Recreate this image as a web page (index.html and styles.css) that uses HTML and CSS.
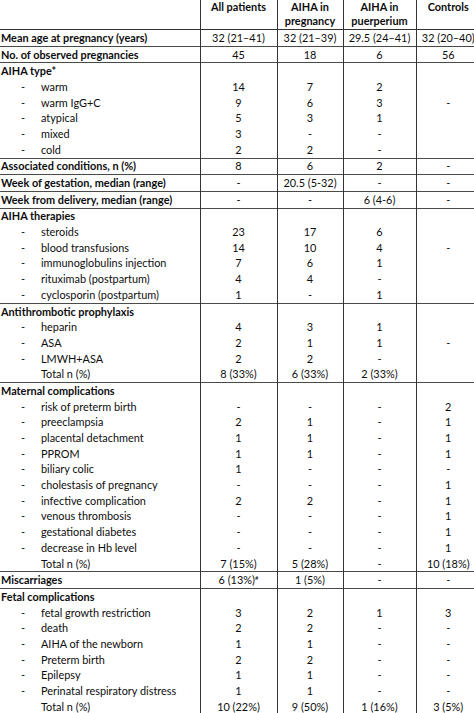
FILE: index.html
```html
<!DOCTYPE html>
<html>
<head>
<meta charset="utf-8">
<link rel="stylesheet" href="styles.css">
</head>
<body>
<div class="wrap">
<table class="tbl">
<colgroup><col class="c0"><col class="c1"><col class="c2"><col class="c3"><col class="c4"></colgroup>
<thead>
<tr class="head"><th></th><th>All patients</th><th>AIHA in<br>pregnancy</th><th>AIHA in<br>puerperium</th><th>Controls</th></tr>
</thead>
<tbody>
<tr class="sec"><td class="lab b">Mean age at pregnancy (years)</td><td>32 (21–41)</td><td>32 (21–39)</td><td>29.5 (24–41)</td><td>32 (20–40)</td></tr>
<tr class="sec"><td class="lab b">No. of observed pregnancies</td><td>45</td><td>18</td><td>6</td><td>56</td></tr>
<tr class="sec"><td class="lab b">AIHA type*</td><td></td><td></td><td></td><td></td></tr>
<tr><td class="lab"><span class="dash">-</span>warm</td><td>14</td><td>7</td><td>2</td><td></td></tr>
<tr><td class="lab"><span class="dash">-</span>warm IgG+C</td><td>9</td><td>6</td><td>3</td><td>-</td></tr>
<tr><td class="lab"><span class="dash">-</span>atypical</td><td>5</td><td>3</td><td>1</td><td></td></tr>
<tr><td class="lab"><span class="dash">-</span>mixed</td><td>3</td><td>-</td><td>-</td><td></td></tr>
<tr><td class="lab"><span class="dash">-</span>cold</td><td>2</td><td>2</td><td>-</td><td></td></tr>
<tr class="sec"><td class="lab b">Associated conditions, n (%)</td><td>8</td><td>6</td><td>2</td><td>-</td></tr>
<tr class="sec"><td class="lab b">Week of gestation, median (range)</td><td>-</td><td>20.5 (5-32)</td><td>-</td><td>-</td></tr>
<tr class="sec"><td class="lab b">Week from delivery, median (range)</td><td>-</td><td>-</td><td>6 (4-6)</td><td>-</td></tr>
<tr class="sec"><td class="lab b">AIHA therapies</td><td></td><td></td><td></td><td></td></tr>
<tr><td class="lab"><span class="dash">-</span>steroids</td><td>23</td><td>17</td><td>6</td><td></td></tr>
<tr><td class="lab"><span class="dash">-</span>blood transfusions</td><td>14</td><td>10</td><td>4</td><td>-</td></tr>
<tr><td class="lab"><span class="dash">-</span>immunoglobulins injection</td><td>7</td><td>6</td><td>1</td><td></td></tr>
<tr><td class="lab"><span class="dash">-</span>rituximab (postpartum)</td><td>4</td><td>4</td><td>-</td><td></td></tr>
<tr><td class="lab"><span class="dash">-</span>cyclosporin (postpartum)</td><td>1</td><td>-</td><td>1</td><td></td></tr>
<tr class="sec"><td class="lab b">Antithrombotic prophylaxis</td><td></td><td></td><td></td><td></td></tr>
<tr><td class="lab"><span class="dash">-</span>heparin</td><td>4</td><td>3</td><td>1</td><td></td></tr>
<tr><td class="lab"><span class="dash">-</span>ASA</td><td>2</td><td>1</td><td>1</td><td>-</td></tr>
<tr><td class="lab"><span class="dash">-</span>LMWH+ASA</td><td>2</td><td>2</td><td>-</td><td></td></tr>
<tr><td class="lab"><span class="dash"></span>Total n (%)</td><td>8 (33%)</td><td>6 (33%)</td><td>2 (33%)</td><td></td></tr>
<tr class="sec"><td class="lab b">Maternal complications</td><td></td><td></td><td></td><td></td></tr>
<tr><td class="lab"><span class="dash">-</span>risk of preterm birth</td><td>-</td><td>-</td><td>-</td><td>2</td></tr>
<tr><td class="lab"><span class="dash">-</span>preeclampsia</td><td>2</td><td>1</td><td>-</td><td>1</td></tr>
<tr><td class="lab"><span class="dash">-</span>placental detachment</td><td>1</td><td>1</td><td>-</td><td>1</td></tr>
<tr><td class="lab"><span class="dash">-</span>PPROM</td><td>1</td><td>1</td><td>-</td><td>1</td></tr>
<tr><td class="lab"><span class="dash">-</span>biliary colic</td><td>1</td><td>-</td><td>-</td><td>-</td></tr>
<tr><td class="lab"><span class="dash">-</span>cholestasis of pregnancy</td><td>-</td><td>-</td><td>-</td><td>1</td></tr>
<tr><td class="lab"><span class="dash">-</span>infective complication</td><td>2</td><td>2</td><td>-</td><td>1</td></tr>
<tr><td class="lab"><span class="dash">-</span>venous thrombosis</td><td>-</td><td>-</td><td>-</td><td>1</td></tr>
<tr><td class="lab"><span class="dash">-</span>gestational diabetes</td><td>-</td><td>-</td><td>-</td><td>1</td></tr>
<tr><td class="lab"><span class="dash">-</span>decrease in Hb level</td><td>-</td><td>-</td><td>-</td><td>1</td></tr>
<tr><td class="lab"><span class="dash"></span>Total n (%)</td><td>7 (15%)</td><td>5 (28%)</td><td>-</td><td>10 (18%)</td></tr>
<tr class="sec"><td class="lab b">Miscarriages</td><td>6 (13%)<sup>#</sup></td><td>1 (5%)</td><td>-</td><td>-</td></tr>
<tr class="sec"><td class="lab b">Fetal complications</td><td></td><td></td><td></td><td></td></tr>
<tr><td class="lab"><span class="dash">-</span>fetal growth restriction</td><td>3</td><td>2</td><td>1</td><td>3</td></tr>
<tr><td class="lab"><span class="dash">-</span>death</td><td>2</td><td>2</td><td>-</td><td>-</td></tr>
<tr><td class="lab"><span class="dash">-</span>AIHA of the newborn</td><td>1</td><td>1</td><td>-</td><td>-</td></tr>
<tr><td class="lab"><span class="dash">-</span>Preterm birth</td><td>2</td><td>2</td><td>-</td><td>-</td></tr>
<tr><td class="lab"><span class="dash">-</span>Epilepsy</td><td>1</td><td>1</td><td>-</td><td>-</td></tr>
<tr><td class="lab"><span class="dash">-</span>Perinatal respiratory distress</td><td>1</td><td>1</td><td>-</td><td>-</td></tr>
<tr><td class="lab"><span class="dash"></span>Total n (%)</td><td>10 (22%)</td><td>9 (50%)</td><td>1 (16%)</td><td>3 (5%)</td></tr>
</tbody>
</table>
</div>
</body>
</html>
```
FILE: styles.css
```css
html, body {
  margin: 0;
  padding: 0;
  background: #ffffff;
  overflow: hidden;
}
.wrap {
  width: 474px;
  height: 713px;
  overflow: hidden;
}
.tbl {
  width: 480px;
  table-layout: fixed;
  border-collapse: collapse;
  font-family: Lato, "Open Sans", sans-serif;
  font-size: 10.9px;
  color: #0d0d0d;
}
.c0 { width: 200px; }
.c1 { width: 77px; }
.c2 { width: 66px; }
.c3 { width: 73px; }
.c4 { width: 64px; }
.tbl th {
  font-weight: 700;
  line-height: 14px;
  height: 29px;
  padding: 0;
  vertical-align: top;
  text-align: center;
  border-bottom: 1px solid #333333;
}
.tbl td {
  height: 15.7px;
  padding: 0;
  line-height: 14px;
  text-align: center;
  white-space: nowrap;
  vertical-align: middle;
}
.tbl th + th, .tbl td + td {
  border-left: 1px solid #333333;
}
.tbl tr.sec td {
  border-top: 1px solid #4a4a4a;
}
.tbl td.lab {
  text-align: left;
  padding-left: 1px;
}
.tbl td.b {
  font-weight: 700;
}
.dash {
  display: inline-block;
  width: 20px;
  margin-left: 20px;
}
sup {
  font-size: 6px;
  line-height: 0;
  vertical-align: 4px;
}
```
